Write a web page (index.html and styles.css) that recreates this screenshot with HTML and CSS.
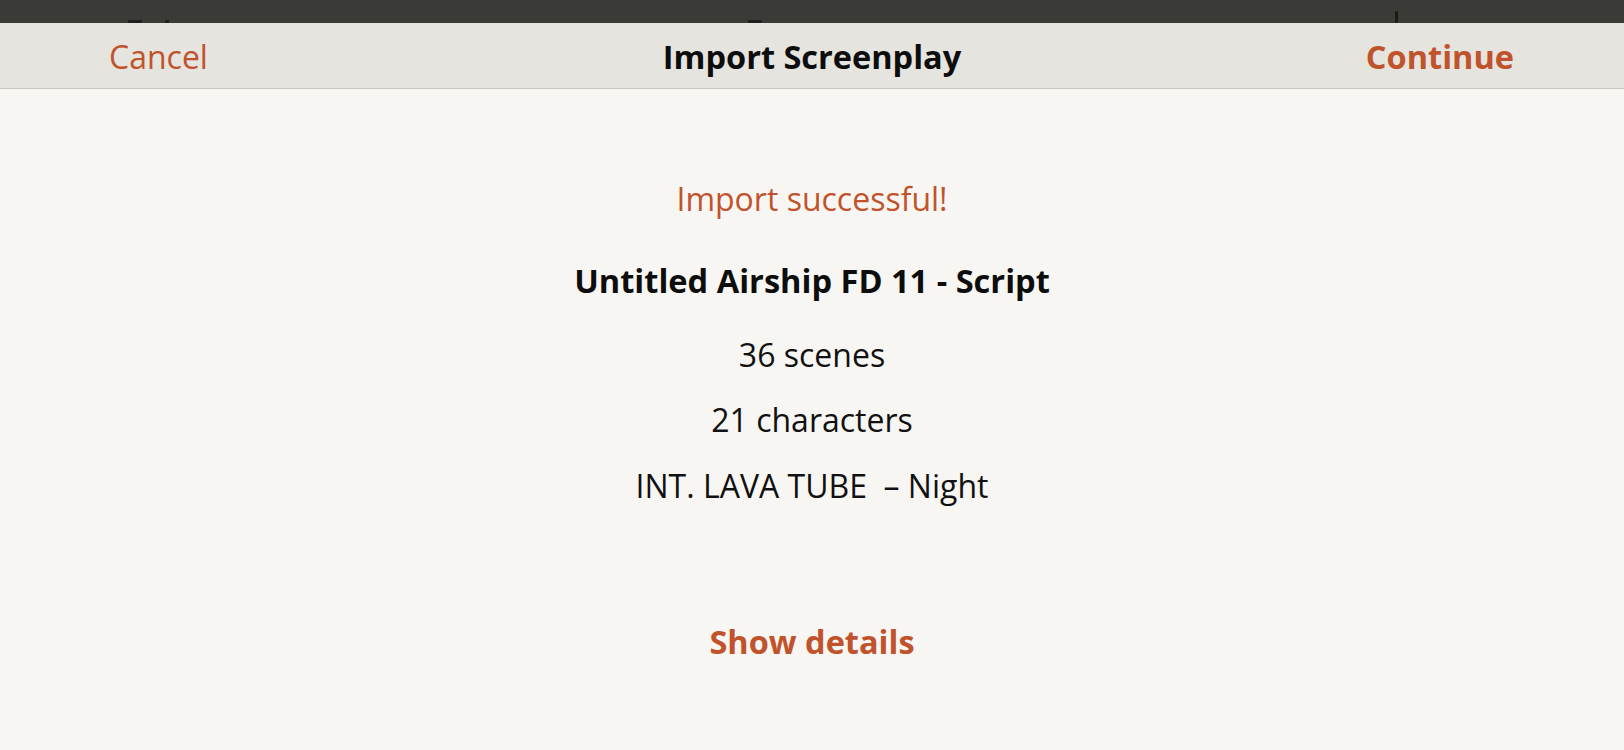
FILE: index.html
```html
<!DOCTYPE html>
<html lang="en">
<head>
<meta charset="utf-8">
<title>Import Screenplay</title>
<link rel="stylesheet" href="styles.css">
</head>
<body>
<div class="topstrip">
  <span class="mark m1"></span>
  <span class="mark m2"></span>
  <span class="mark m3"></span>
  <span class="mark m4"></span>
</div>
<header class="navbar">
  <span class="nav-btn cancel">Cancel</span>
  <h1 class="nav-title">Import Screenplay</h1>
  <span class="nav-btn continue">Continue</span>
</header>
<main class="content">
  <p class="status">Import successful!</p>
  <p class="doc-title">Untitled Airship FD 11 - Script</p>
  <p class="stat scenes">36 scenes</p>
  <p class="stat chars">21 characters</p>
  <p class="stat scene-name">INT. LAVA TUBE &nbsp;– Night</p>
  <p class="details">Show details</p>
</main>
</body>
</html>
```
FILE: styles.css
```css
html, body {
  margin: 0;
  padding: 0;
  background: #f8f6f3;
  font-family: "Open Sans", "Noto Sans", sans-serif;
  color: #111;
}

.topstrip {
  height: 23px;
  background: #3a3a37;
  position: relative;
  overflow: hidden;
}

.mark {
  position: absolute;
  bottom: 0;
  height: 3px;
  background: #1f1f1d;
  border-radius: 1px;
}
.m1 { left: 128px; width: 14px; }
.m2 { left: 165px; width: 4px; }
.m3 { left: 748px; width: 14px; }
.m4 { left: 1395px; width: 3px; height: 12px; background: #201a16; }

.navbar {
  height: 65px;
  background: #e5e4de;
  border-bottom: 1px solid #c9c8c3;
  display: flex;
  align-items: center;
  justify-content: space-between;
  padding: 0 110px 0 109px;
  position: relative;
}

.nav-btn {
  font-size: 32px;
  color: #c0532c;
  line-height: 1;
  padding-top: 3px;
}

.continue {
  font-weight: 700;
  font-size: 32.5px;
}

.nav-title {
  position: absolute;
  left: 0;
  right: 0;
  text-align: center;
  margin: 0;
  font-size: 32.5px;
  font-weight: 700;
  color: #0d0d0d;
  line-height: 1;
  padding-top: 3px;
  pointer-events: none;
}

.content {
  display: flex;
  flex-direction: column;
  align-items: center;
  padding-top: 88px;
}

.content p {
  margin: 0;
  line-height: 44px;
  font-size: 32px;
  text-align: center;
}

.status {
  color: #c0532c;
}

.doc-title {
  margin-top: 38px !important;
  font-weight: 700;
  font-size: 32.6px !important;
  color: #0d0d0d;
}

.scenes { margin-top: 30px !important; }
.chars { margin-top: 21px !important; }
.scene-name { margin-top: 22px !important; }

.details {
  margin-top: 112px !important;
  font-weight: 700;
  font-size: 32.5px !important;
  color: #c0532c;
}
```
